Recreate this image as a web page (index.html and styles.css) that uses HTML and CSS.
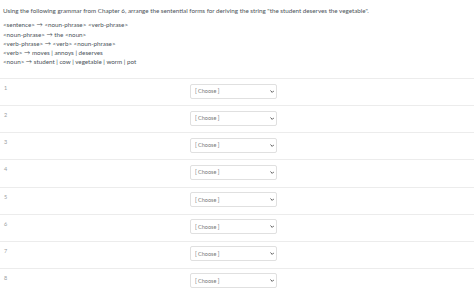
FILE: index.html
```html
<!DOCTYPE html>
<html lang="en">
<head>
  <meta charset="UTF-8">
  <meta name="viewport" content="width=device-width, initial-scale=1.0">
  <title>Question</title>
  <link rel="stylesheet" href="styles.css">
</head>
<body>

<div class="question-text">
  <p>Using the following grammar from Chapter 6, arrange the sentential forms for deriving the string "the student deserves the vegetable".</p>
  <p>
    &lt;sentence&gt; &rarr; &lt;noun-phrase&gt; &lt;verb-phrase&gt;<br>
    &lt;noun-phrase&gt; &rarr; the &lt;noun&gt;<br>
    &lt;verb-phrase&gt; &rarr; &lt;verb&gt; &lt;noun-phrase&gt;<br>
    &lt;verb&gt; &rarr; moves | annoys | deserves<br>
    &lt;noun&gt; &rarr; student | cow | vegetable | worm | pot
  </p>
</div>

<div class="answers">
  <div class="answer-row"><span class="num">1</span><div class="select-wrap"><select><option>[ Choose ]</option></select><svg class="chev" viewBox="0 0 10 6"><path d="M1 1l4 4 4-4" /></svg></div></div>
  <div class="answer-row"><span class="num">2</span><div class="select-wrap"><select><option>[ Choose ]</option></select><svg class="chev" viewBox="0 0 10 6"><path d="M1 1l4 4 4-4" /></svg></div></div>
  <div class="answer-row"><span class="num">3</span><div class="select-wrap"><select><option>[ Choose ]</option></select><svg class="chev" viewBox="0 0 10 6"><path d="M1 1l4 4 4-4" /></svg></div></div>
  <div class="answer-row"><span class="num">4</span><div class="select-wrap"><select><option>[ Choose ]</option></select><svg class="chev" viewBox="0 0 10 6"><path d="M1 1l4 4 4-4" /></svg></div></div>
  <div class="answer-row"><span class="num">5</span><div class="select-wrap"><select><option>[ Choose ]</option></select><svg class="chev" viewBox="0 0 10 6"><path d="M1 1l4 4 4-4" /></svg></div></div>
  <div class="answer-row"><span class="num">6</span><div class="select-wrap"><select><option>[ Choose ]</option></select><svg class="chev" viewBox="0 0 10 6"><path d="M1 1l4 4 4-4" /></svg></div></div>
  <div class="answer-row"><span class="num">7</span><div class="select-wrap"><select><option>[ Choose ]</option></select><svg class="chev" viewBox="0 0 10 6"><path d="M1 1l4 4 4-4" /></svg></div></div>
  <div class="answer-row"><span class="num">8</span><div class="select-wrap"><select><option>[ Choose ]</option></select><svg class="chev" viewBox="0 0 10 6"><path d="M1 1l4 4 4-4" /></svg></div></div>
</div>

</body>
</html>
```

FILE: styles.css
```css
body {
  margin: 0;
  padding: 0 0 0 3px;
  font-family: Lato, "Open Sans", sans-serif;
  color: #4b5359;
  background: #fff;
}
.question-text {
  font-size: 6.25px;
  line-height: 9.3px;
  padding-top: 5.5px;
  height: 78px;
  box-sizing: border-box;
}
.question-text p {
  margin: 0 0 5.5px 0;
}
.answer-row {
  display: flex;
  align-items: flex-start;
  height: 27.15px;
  box-sizing: border-box;
  border-top: 1px solid #ececec;
  margin-left: -3px;
}
.num {
  width: 186px;
  padding: 6px 0 0 4px;
  font-size: 5.5px;
  color: #9a9ea1;
}
.select-wrap {
  position: relative;
  margin-top: 4.5px;
}
select {
  appearance: none;
  display: block;
  width: 87px;
  height: 15px;
  padding: 0 4px;
  font-family: Lato, sans-serif;
  font-size: 5.5px;
  color: #777;
  background: #fff;
  border: 1px solid #e0e0e0;
  border-radius: 2px;
  outline: none;
}
.chev {
  position: absolute;
  right: 3px;
  top: 6px;
  width: 4.5px;
  height: 3px;
  fill: none;
  stroke: #555;
  stroke-width: 2.2;
}
```
